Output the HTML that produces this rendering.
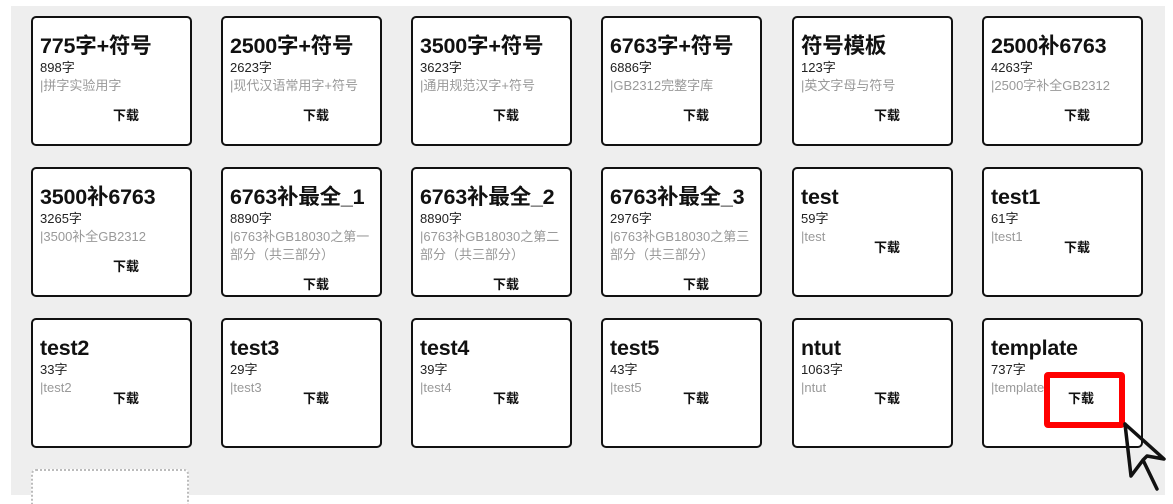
<!DOCTYPE html>
<html><head><meta charset="utf-8"><style>
html,body{margin:0;width:1173px;height:504px;overflow:hidden}
body{background:#fff;position:relative;font-family:"Liberation Sans","Noto Sans CJK SC",sans-serif}
.panel{position:absolute;left:11px;top:6px;width:1154px;height:489px;background:#eeeeee}
.c{position:absolute;width:157px;height:126px;border:2px solid #111;border-radius:5px;background:#fff;box-sizing:content-box;overflow:hidden}
.t{position:absolute;left:7px;top:14px;font-size:21.5px;font-weight:bold;line-height:28px;color:#111;white-space:nowrap;letter-spacing:-0.2px}
.n{position:absolute;left:7px;top:42px;font-size:13px;line-height:16px;color:#222}
.d{position:absolute;left:7px;top:59px;width:150px;font-size:13px;line-height:18px;color:#999;overflow:hidden;white-space:nowrap}
.b{position:absolute;left:80px;font-size:13px;font-weight:bold;color:#111;line-height:16px}
</style></head><body>
<div class="panel"></div>

<div class="c" style="left:31px;top:16px"><div class="t">775字+符号</div><div class="n">898字</div><div class="d">|拼字实验用字</div><div class="b" style="top:90px">下载</div></div>
<div class="c" style="left:221px;top:16px"><div class="t">2500字+符号</div><div class="n">2623字</div><div class="d">|现代汉语常用字+符号</div><div class="b" style="top:90px">下载</div></div>
<div class="c" style="left:411px;top:16px"><div class="t">3500字+符号</div><div class="n">3623字</div><div class="d">|通用规范汉字+符号</div><div class="b" style="top:90px">下载</div></div>
<div class="c" style="left:601px;top:16px"><div class="t">6763字+符号</div><div class="n">6886字</div><div class="d">|GB2312完整字库</div><div class="b" style="top:90px">下载</div></div>
<div class="c" style="left:792px;top:16px"><div class="t">符号模板</div><div class="n">123字</div><div class="d">|英文字母与符号</div><div class="b" style="top:90px">下载</div></div>
<div class="c" style="left:982px;top:16px"><div class="t">2500补6763</div><div class="n">4263字</div><div class="d">|2500字补全GB2312</div><div class="b" style="top:90px">下载</div></div>

<div class="c" style="left:31px;top:167px"><div class="t">3500补6763</div><div class="n">3265字</div><div class="d">|3500补全GB2312</div><div class="b" style="top:90px">下载</div></div>
<div class="c" style="left:221px;top:167px"><div class="t">6763补最全_1</div><div class="n">8890字</div><div class="d">|6763补GB18030之第一<br>部分（共三部分）</div><div class="b" style="top:108px">下载</div></div>
<div class="c" style="left:411px;top:167px"><div class="t">6763补最全_2</div><div class="n">8890字</div><div class="d">|6763补GB18030之第二<br>部分（共三部分）</div><div class="b" style="top:108px">下载</div></div>
<div class="c" style="left:601px;top:167px"><div class="t">6763补最全_3</div><div class="n">2976字</div><div class="d">|6763补GB18030之第三<br>部分（共三部分）</div><div class="b" style="top:108px">下载</div></div>
<div class="c" style="left:792px;top:167px"><div class="t">test</div><div class="n">59字</div><div class="d">|test</div><div class="b" style="top:71px">下载</div></div>
<div class="c" style="left:982px;top:167px"><div class="t">test1</div><div class="n">61字</div><div class="d">|test1</div><div class="b" style="top:71px">下载</div></div>

<div class="c" style="left:31px;top:318px"><div class="t">test2</div><div class="n">33字</div><div class="d">|test2</div><div class="b" style="top:71px">下载</div></div>
<div class="c" style="left:221px;top:318px"><div class="t">test3</div><div class="n">29字</div><div class="d">|test3</div><div class="b" style="top:71px">下载</div></div>
<div class="c" style="left:411px;top:318px"><div class="t">test4</div><div class="n">39字</div><div class="d">|test4</div><div class="b" style="top:71px">下载</div></div>
<div class="c" style="left:601px;top:318px"><div class="t">test5</div><div class="n">43字</div><div class="d">|test5</div><div class="b" style="top:71px">下载</div></div>
<div class="c" style="left:792px;top:318px"><div class="t">ntut</div><div class="n">1063字</div><div class="d">|ntut</div><div class="b" style="top:71px">下载</div></div>
<div class="c" style="left:982px;top:318px;overflow:visible"><div class="t">template</div><div class="n">737字</div><div class="d">|template</div>
<div style="position:absolute;left:60px;top:52px;width:69px;height:44px;border:6px solid #ff0000;border-radius:4px;background:#fff"></div>
<div class="b" style="top:71px;left:84px">下载</div></div>

<div style="position:absolute;left:31px;top:469px;width:154px;height:40px;border:2px dotted #bbb;border-radius:5px;background:#fff"></div>

<svg style="position:absolute;left:0;top:0" width="1173" height="504">
<path d="M1125,424 L1131,476 L1143,460 L1157,489 M1125,424 L1164,459 L1147,456 L1143,460" fill="none" stroke="#111" stroke-width="3.5" stroke-linejoin="round" stroke-linecap="round"/>
</svg>
</body></html>
